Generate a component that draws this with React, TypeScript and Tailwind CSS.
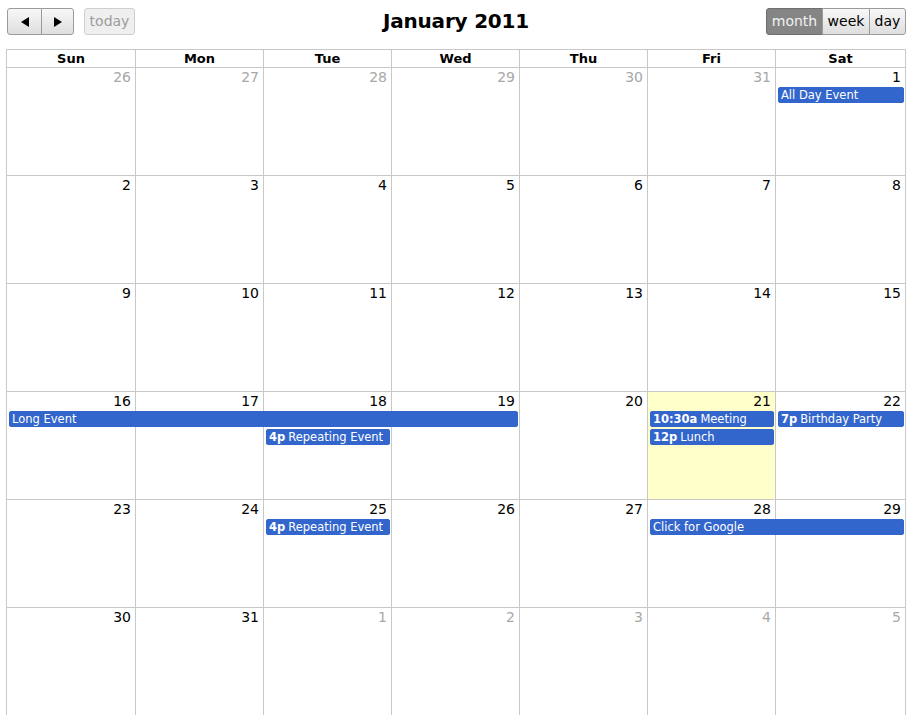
import React from "react";

type Ev = { col: number; span: number; row: number; time?: string; title: string };

const colStart: Record<number, string> = {
  1: "col-start-1",
  2: "col-start-2",
  3: "col-start-3",
  4: "col-start-4",
  5: "col-start-5",
  6: "col-start-6",
  7: "col-start-7",
};
const colSpan: Record<number, string> = {
  1: "col-span-1",
  2: "col-span-2",
  3: "col-span-3",
  4: "col-span-4",
};
const rowStart: Record<number, string> = {
  2: "row-start-2",
  3: "row-start-3",
};

const weeks: { days: number[]; other: boolean[]; events: Ev[]; today?: number }[] = [
  {
    days: [26, 27, 28, 29, 30, 31, 1],
    other: [true, true, true, true, true, true, false],
    events: [{ col: 7, span: 1, row: 2, title: "All Day Event" }],
  },
  { days: [2, 3, 4, 5, 6, 7, 8], other: Array(7).fill(false), events: [] },
  { days: [9, 10, 11, 12, 13, 14, 15], other: Array(7).fill(false), events: [] },
  {
    days: [16, 17, 18, 19, 20, 21, 22],
    other: Array(7).fill(false),
    today: 5,
    events: [
      { col: 1, span: 4, row: 2, title: "Long Event" },
      { col: 3, span: 1, row: 3, time: "4p", title: "Repeating Event" },
      { col: 6, span: 1, row: 2, time: "10:30a", title: "Meeting" },
      { col: 6, span: 1, row: 3, time: "12p", title: "Lunch" },
      { col: 7, span: 1, row: 2, time: "7p", title: "Birthday Party" },
    ],
  },
  {
    days: [23, 24, 25, 26, 27, 28, 29],
    other: Array(7).fill(false),
    events: [
      { col: 3, span: 1, row: 2, time: "4p", title: "Repeating Event" },
      { col: 6, span: 2, row: 2, title: "Click for Google" },
    ],
  },
  {
    days: [30, 31, 1, 2, 3, 4, 5],
    other: [false, false, true, true, true, true, true],
    events: [],
  },
];

const dayNames = ["Sun", "Mon", "Tue", "Wed", "Thu", "Fri", "Sat"];
const gridCols = "grid grid-cols-[129px_128px_128px_128px_128px_128px_130px]";

function Triangle({ dir }: { dir: "left" | "right" }) {
  return (
    <svg width="8" height="10" viewBox="0 0 8 10">
      {dir === "left" ? <polygon points="8,0 8,10 0,5" fill="#000" /> : <polygon points="0,0 0,10 8,5" fill="#000" />}
    </svg>
  );
}

export default function App() {
  return (
    <div className="w-[917px] h-[715px] overflow-hidden bg-white text-black font-['DejaVu_Sans',sans-serif]">
      <div className="ml-[6px] w-[900px]">
        {/* Toolbar */}
        <div className="grid grid-cols-[1fr_auto_1fr] h-[49px] pt-[8px]">
          <div className="flex items-start">
            <div className="ml-[1px] flex h-[27px]">
              <button className="flex w-[35px] items-center justify-center rounded-l-[3px] border border-[#9a9a9a] bg-linear-to-b from-[#f8f8f8] to-[#dedede]">
                <Triangle dir="left" />
              </button>
              <button className="-ml-px flex w-[33px] items-center justify-center rounded-r-[3px] border border-[#9a9a9a] bg-linear-to-b from-[#f8f8f8] to-[#dedede]">
                <Triangle dir="right" />
              </button>
            </div>
            <button className="ml-[10px] h-[27px] w-[51px] rounded-[3px] border border-[#cfcfcf] bg-[#efefef] text-[14px] text-[#9c9c9c]">
              today
            </button>
          </div>
          <div className="pt-[1px] text-[20px] font-bold leading-[24px] tracking-[-0.2px]">January 2011</div>
          <div className="flex items-start justify-end">
            <div className="flex h-[27px] text-[14px]">
              <button className="w-[57px] rounded-l-[3px] border border-[#6e6e6e] bg-[#858585] text-[#f2f2f2]">month</button>
              <button className="-ml-px w-[48px] border border-[#9a9a9a] bg-linear-to-b from-[#f8f8f8] to-[#dedede]">week</button>
              <button className="-ml-px w-[37px] rounded-r-[3px] border border-[#9a9a9a] bg-linear-to-b from-[#f8f8f8] to-[#dedede]">day</button>
            </div>
          </div>
        </div>

        {/* Calendar */}
        <div className="border-l border-t border-[#c8c8c8]">
          <div className={gridCols}>
            {dayNames.map((d) => (
              <div key={d} className="h-[18px] border-b border-r border-[#c8c8c8] text-center text-[13px] font-bold leading-[17px]">
                {d}
              </div>
            ))}
          </div>
          {weeks.map((w, wi) => (
            <div key={wi} className={`${gridCols} h-[108px] grid-rows-[19px_18px_18px_1fr]`}>
              {w.days.map((d, di) => (
                <div
                  key={di}
                  className={`${colStart[di + 1]} row-start-1 row-end-5 border-b border-r border-[#c8c8c8] pr-[4px] text-right text-[14px] leading-[18px] ${
                    w.today === di ? "bg-[#ffffc9]" : ""
                  } ${w.other[di] ? "text-[#a8a8a8]" : "text-black"}`}
                >
                  {d}
                </div>
              ))}
              {w.events.map((e, ei) => (
                <div
                  key={ei}
                  className={`${colStart[e.col]} ${colSpan[e.span]} ${rowStart[e.row]} z-10 ml-[2px] mr-[2px] h-[16px] self-start overflow-hidden whitespace-nowrap rounded-[2px] border border-[#3366cc] bg-[#3366cc] pl-[2px] text-[11.5px] leading-[14px] text-white`}
                >
                  {e.time && <span className="mr-[3px] font-bold">{e.time}</span>}
                  {e.title}
                </div>
              ))}
            </div>
          ))}
        </div>
      </div>
    </div>
  );
}
